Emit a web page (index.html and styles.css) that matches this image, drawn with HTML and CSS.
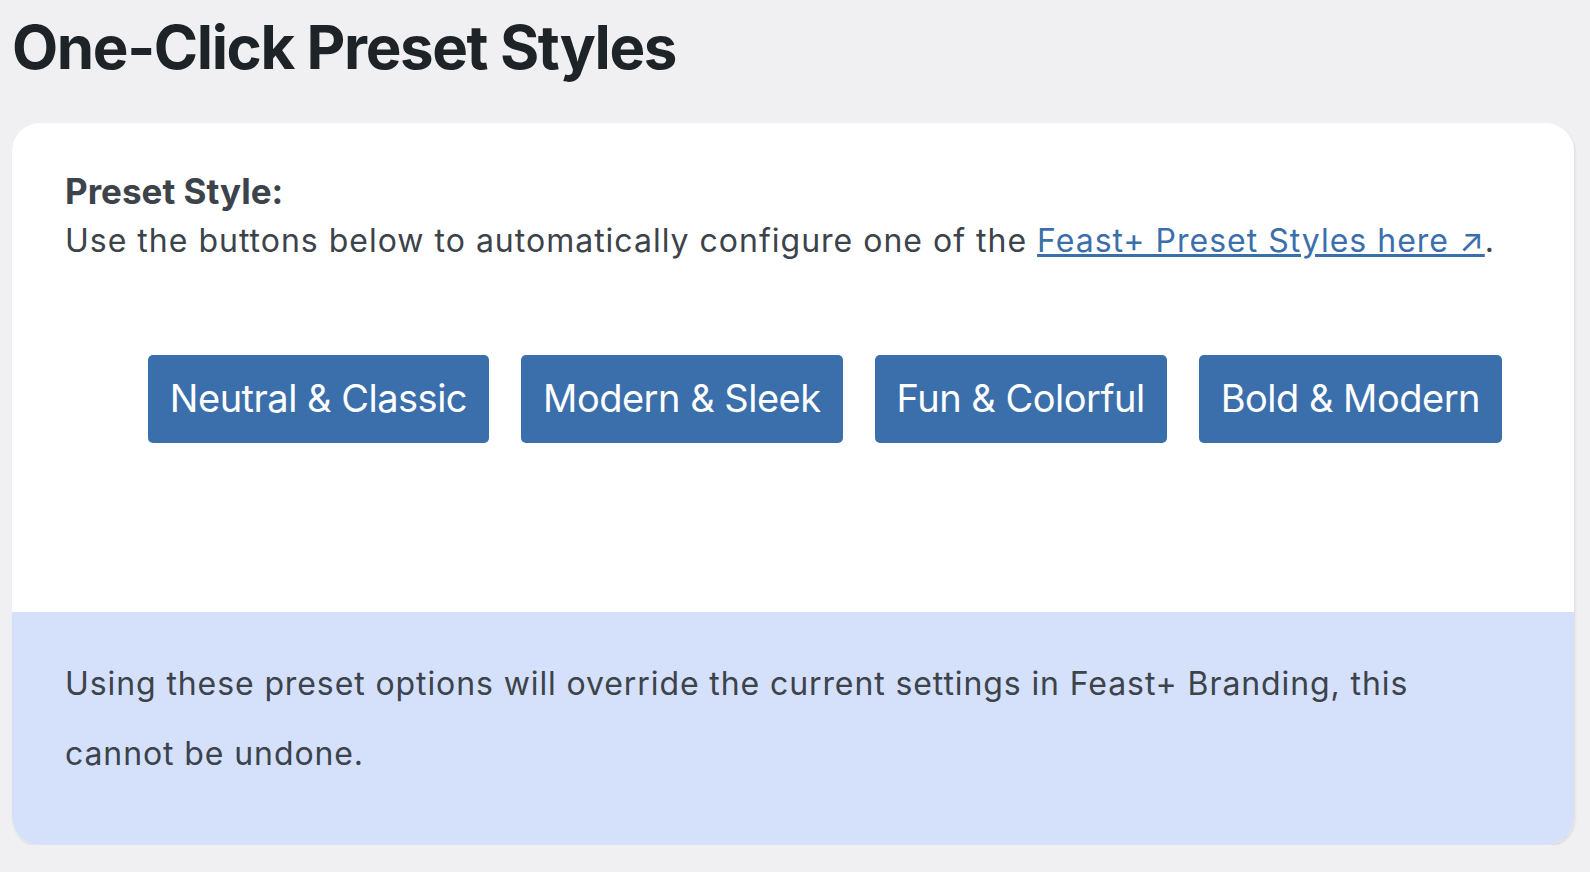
FILE: index.html
```html
<!DOCTYPE html>
<html lang="en">
<head>
    <meta charset="UTF-8">
    <meta name="viewport" content="width=device-width, initial-scale=1.0">
    <title>One-Click Preset Styles</title>
    <link rel="stylesheet" href="styles.css">
</head>
<body>
    <h1 class="page-title">One-Click Preset Styles</h1>

    <div class="card">
        <div class="card-body">
            <span class="label">Preset Style:</span>
            <p class="desc">Use the buttons below to automatically configure one of the <a href="#">Feast+ Preset Styles here &#8599;</a>.</p>

            <div class="presets">
                <button class="btn">Neutral &amp; Classic</button>
                <button class="btn">Modern &amp; Sleek</button>
                <button class="btn">Fun &amp; Colorful</button>
                <button class="btn">Bold &amp; Modern</button>
            </div>
        </div>
        <div class="card-footer">
            <p>Using these preset options will override the current settings in Feast+ Branding, this cannot be undone.</p>
        </div>
    </div>
</body>
</html>
```

FILE: styles.css
```css
body {
    font-family: Inter, "Noto Sans", sans-serif;
    background-color: #f0f0f2;
    color: #3c434a;
    margin: 0;
    padding: 0 16px 0 12px;
}
.page-title {
    font-size: 60px;
    font-weight: 700;
    letter-spacing: -1.4px;
    color: #1d2327;
    margin: 11px 0 39px;
    line-height: 1.21;
}
.card {
    background: white;
    border-radius: 28px;
    overflow: hidden;
    box-shadow: 1px 2px 3px rgba(0, 0, 0, 0.09);
}
.card-body {
    padding: 43px 53px 169px;
}
.label {
    display: block;
    font-size: 35px;
    font-weight: 700;
    line-height: 50px;
}
.desc {
    font-size: 32px;
    letter-spacing: 1px;
    line-height: 50px;
    margin: 0;
}
.desc a {
    color: #3b6fab;
}
.presets {
    display: flex;
    justify-content: flex-end;
    gap: 32px;
    margin-top: 89px;
    padding-right: 19px;
}
.btn {
    font-family: inherit;
    font-size: 38px;
    letter-spacing: -0.5px;
    line-height: 1.21;
    padding: 21px 22px;
    border: none;
    border-radius: 5px;
    background-color: #3b6fab;
    color: white;
    cursor: pointer;
}
.btn:hover {
    opacity: 0.9;
}
.card-footer {
    background-color: #d5e0fa;
    padding: 37px 53px 56px;
}
.card-footer p {
    font-size: 32px;
    letter-spacing: 0.9px;
    line-height: 70px;
    margin: 0;
    max-width: 1400px;
}
```
